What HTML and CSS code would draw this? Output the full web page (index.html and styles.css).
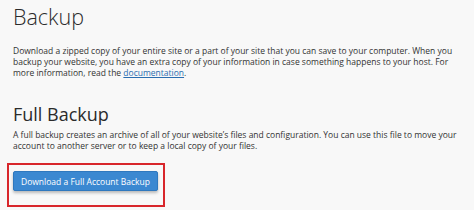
FILE: index.html
```html
<!DOCTYPE html>
<html>

<head>
    <link rel="stylesheet" href="styles.css">
    <title>Backup</title>
</head>

<body>
    <div id="page-wrapper">
        <h1 class="page-title">Backup</h1>
        <p class="intro">Download a zipped copy of your entire site or a part of your site that you can save to your computer. When you
            backup your website, you have an extra copy of your information in case something happens to your host. For
            more information, read the <a href="#">documentation</a>.</p>

        <h2 class="section-title">Full Backup</h2>
        <p class="intro">A full backup creates an archive of all of your website’s files and configuration. You can use this file to move your
            account to another server or to keep a local copy of your files.</p>

        <div class="highlight-box">
            <button class="btn-primary">Download a Full Account Backup</button>
        </div>
    </div>
</body>

</html>
```

FILE: styles.css
```css
html {
    font-family: "Open Sans", "Noto Sans", sans-serif;
    background: #f8f8f8;
    -webkit-font-smoothing: antialiased;
}

body {
    margin: 0;
}

#page-wrapper {
    padding: 0 10px 0 13px;
    color: #333;
}

.page-title {
    font-size: 21.5px;
    font-weight: 300;
    line-height: 26px;
    margin: 4px 0 0 0;
    color: #2b2b2b;
}

.section-title {
    font-size: 18px;
    font-weight: 400;
    line-height: 22px;
    margin: 0;
    color: #2b2b2b;
}

.intro {
    font-size: 8.5px;
    line-height: 11px;
    margin: 15px 0 25px 0;
}

.section-title + .intro {
    margin-top: 4px;
    margin-bottom: 0;
}

.intro a {
    display: inline-block;
    line-height: 11px;
    color: #2a6db0;
}

.highlight-box {
    display: inline-block;
    margin: 12px 0 0 -6px;
    padding: 6px 5px 14px 4px;
    border: 2px solid #d8262b;
}

.btn-primary {
    display: block;
    font-family: "Open Sans", "Noto Sans", sans-serif;
    font-size: 8.5px;
    color: #fff;
    background: #3b88d1;
    border: 1px solid #2f78be;
    border-radius: 2px;
    padding: 0 7px;
    height: 20px;
    box-shadow: 0 2px 3px rgba(0, 0, 0, 0.25);
}
```
